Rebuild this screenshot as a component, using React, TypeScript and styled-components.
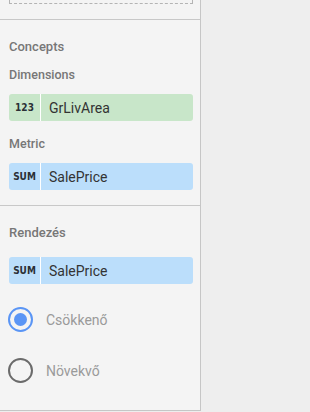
import React, { useState } from 'react';
import styled, { createGlobalStyle } from 'styled-components';

const GlobalStyle = createGlobalStyle`
  html, body {
    margin: 0;
    padding: 0;
    background: #eeeeee;
    font-family: Roboto, "Liberation Sans", sans-serif;
  }
`;

type ChipColor = 'green' | 'blue';

interface Field {
  badge: string;
  name: string;
  color: ChipColor;
}

const chipColors: { [key in ChipColor]: string } = {
  green: '#c8e6c9',
  blue: '#bbdefb',
};

const App: React.FC = () => {
  const [order, setOrder] = useState<'desc' | 'asc'>('desc');

  const dimension: Field = { badge: '123', name: 'GrLivArea', color: 'green' };
  const metric: Field = { badge: 'SUM', name: 'SalePrice', color: 'blue' };

  return (
    <>
      <GlobalStyle />
      <Panel>
        <TopSection>
          <DropZone />
        </TopSection>

        <Section>
          <Heading>Concepts</Heading>
          <Label>Dimensions</Label>
          <FieldChip field={dimension} />
          <Label>Metric</Label>
          <FieldChip field={metric} />
        </Section>

        <Section>
          <Heading>Rendezés</Heading>
          <FieldChip field={metric} />
          <RadioList>
            <RadioRow onClick={() => setOrder('desc')}>
              <RadioCircle checked={order === 'desc'} />
              <RadioText>Csökkenő</RadioText>
            </RadioRow>
            <RadioRow onClick={() => setOrder('asc')}>
              <RadioCircle checked={order === 'asc'} />
              <RadioText>Növekvő</RadioText>
            </RadioRow>
          </RadioList>
        </Section>
      </Panel>
    </>
  );
};

const FieldChip: React.FC<{ field: Field }> = ({ field }) => (
  <Chip color={chipColors[field.color]}>
    <ChipBadge>{field.badge}</ChipBadge>
    <ChipName>{field.name}</ChipName>
  </Chip>
);

const Panel = styled.div`
  width: 200px;
  background: #f4f4f4;
  border-right: 1px solid #c6c6c6;
  border-bottom: 1px solid #c6c6c6;
`;

const TopSection = styled.div`
  padding: 0 7px 15px 9px;
  border-bottom: 1px solid #c8c8c8;
`;

const DropZone = styled.div`
  height: 3px;
  border: 1px dashed #b4b4b4;
  border-top: none;
`;

const Section = styled.div`
  display: flex;
  flex-direction: column;
  padding: 19px 7px 15px 9px;
  & + & {
    border-top: 1px solid #c8c8c8;
  }
  &:last-child {
    padding-bottom: 14px;
  }
`;

const Heading = styled.div`
  font-size: 13px;
  line-height: 16px;
  font-weight: 500;
  color: #777777;
  margin-bottom: 12px;

  & + div[data-chip] {
    margin-top: 4px;
  }
`;

const Label = styled.div`
  font-size: 12.5px;
  line-height: 16px;
  font-weight: 500;
  color: #777777;
  margin-bottom: 11px;

  div[data-chip] + & {
    margin-top: 15px;
  }
`;

const Chip = styled.div.attrs({ 'data-chip': true })<{ color: string }>`
  display: flex;
  align-items: stretch;
  height: 27px;
  background: ${props => props.color};
  border-radius: 3px;
`;

const ChipBadge = styled.div`
  width: 31px;
  display: flex;
  align-items: center;
  justify-content: center;
  border-right: 1px solid #ffffff;
  font-family: "DejaVu Sans Condensed", "DejaVu Sans", sans-serif;
  font-weight: bold;
  font-size: 10px;
  color: #2b3036;
`;

const ChipName = styled.div`
  display: flex;
  align-items: center;
  padding-left: 8px;
  font-size: 14px;
  color: #333333;
`;

const RadioList = styled.div`
  display: flex;
  flex-direction: column;
  margin-top: 10px;
`;

const RadioRow = styled.div`
  display: flex;
  align-items: center;
  height: 51px;
  cursor: pointer;
`;

const RadioCircle = styled.div<{ checked: boolean }>`
  box-sizing: border-box;
  width: 25px;
  height: 25px;
  margin-left: -1px;
  border-radius: 50%;
  border: 2px solid ${props => (props.checked ? '#5a95f5' : '#6b6b6b')};
  display: flex;
  align-items: center;
  justify-content: center;

  &::after {
    content: '';
    width: 13px;
    height: 13px;
    border-radius: 50%;
    background: ${props => (props.checked ? '#5a95f5' : 'transparent')};
  }
`;

const RadioText = styled.span`
  margin-left: 13px;
  font-size: 14px;
  color: #9a9a9a;
`;

export default App;
